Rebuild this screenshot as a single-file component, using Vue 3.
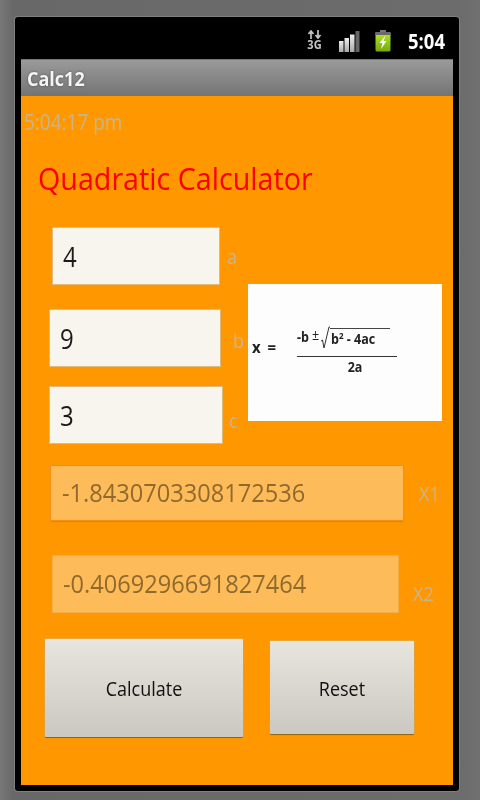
<script setup>
const inputs = [
  { id: 'a', value: '4', cls: 'row-a' },
  { id: 'b', value: '9', cls: 'row-b' },
  { id: 'c', value: '3', cls: 'row-c' }
]
const results = [
  { id: 'X1', value: '-1.8430703308172536', cls: 'res-1' },
  { id: 'X2', value: '-0.4069296691827464', cls: 'res-2' }
]
</script>

<template>
  <div class="desk">
    <div class="phone">
      <header class="status">
        <div class="net">
          <svg width="15" height="9" viewBox="0 0 15 9" class="arrows">
            <path d="M4 9V2M1.500 4L4 1l2.500 3M11 0v7M8.500 5L11 8l2.500-3" fill="none" stroke="#c4c4c4" stroke-width="1.700" />
          </svg>
          <span class="g3"><span class="tall">3G</span></span>
        </div>
        <svg class="signal" width="21" height="21" viewBox="0 0 21 21">
          <defs>
            <linearGradient id="bar" x1="0" y1="0" x2="0" y2="1">
              <stop offset="0" stop-color="#eee" /><stop offset="1" stop-color="#aaa" />
            </linearGradient>
          </defs>
          <rect x="0" y="10" width="4.500" height="11" fill="url(#bar)" />
          <rect x="5.500" y="7" width="4.500" height="14" fill="url(#bar)" />
          <rect x="11" y="3.500" width="4.500" height="17.500" fill="url(#bar)" />
          <rect x="16.500" y="0" width="4" height="21" fill="#666" />
        </svg>
        <svg class="battery" width="16" height="22" viewBox="0 0 16 22">
          <defs>
            <linearGradient id="cell" x1="0" y1="0" x2="0" y2="1">
              <stop offset="0" stop-color="#b8e82c" /><stop offset="1" stop-color="#74aa08" />
            </linearGradient>
          </defs>
          <rect x="5" y="0" width="6" height="3" fill="#777" />
          <rect x="0.500" y="2" width="15" height="19.500" rx="1.500" fill="url(#cell)" />
          <rect x="0.500" y="2" width="15" height="3" fill="#6a6a6a" />
          <path d="M10.500 5.500L4.500 13h3L6 19 11.500 11h-3z" fill="#fff" />
        </svg>
        <span class="clock"><span class="tall">5:04</span></span>
      </header>

      <div class="titlebar"><span class="tall">Calc12</span></div>

      <main class="screen">
        <div class="time"><span class="tall">5:04:17 pm</span></div>
        <h1 class="heading"><span class="tall">Quadratic Calculator</span></h1>

        <section class="top">
          <div class="inputs">
            <div v-for="row in inputs" :key="row.id" class="row" :class="row.cls">
              <div class="field"><span class="tall">{{ row.value }}</span></div>
              <span class="label"><span class="tall">{{ row.id }}</span></span>
            </div>
          </div>
          <div class="formula">
            <span class="x"><span class="tall">x =</span></span>
            <div class="fraction">
              <div class="numerator">
                <span class="tall">-b</span>
                <span class="pm tall">±</span>
                <svg class="root" width="10" height="23" viewBox="0 0 10 23">
                  <path d="M1 15l1.500-1 1.500 8L9 1h1" fill="none" stroke="#333" stroke-width="1" />
                </svg>
                <span class="radicand"><span class="tall">b<sup>2</sup> - 4ac</span></span>
              </div>
              <div class="bar"></div>
              <div class="denominator"><span class="tall">2a</span></div>
            </div>
          </div>
        </section>

        <div v-for="row in results" :key="row.id" class="result" :class="row.cls">
          <div class="output"><span class="tall">{{ row.value }}</span></div>
          <span class="label"><span class="tall">{{ row.id }}</span></span>
        </div>

        <div class="actions">
          <button class="btn calc"><span class="tall">Calculate</span></button>
          <button class="btn reset"><span class="tall">Reset</span></button>
        </div>
      </main>
    </div>
  </div>
</template>

<style scoped>
.desk {
  width: 480px;
  height: 800px;
  box-sizing: border-box;
  padding: 17px 21px 9px 15px;
  background: linear-gradient(90deg, #787878, #686868 14px, #6c6c6c 460px, #707070);
  font-family: "Open Sans", "Noto Sans", sans-serif;
  overflow: hidden;
}
.tall {
  display: inline-block;
  transform: scaleY(1.11);
}
.phone {
  width: 444px;
  height: 774px;
  box-sizing: border-box;
  padding: 0 6px 6px;
  background: #000;
  border-radius: 3px;
  display: flex;
  flex-direction: column;
  box-shadow: 0 0 0 1px #808080;
  filter: blur(0.4px);
}
.status {
  height: 42px;
  flex: none;
  display: flex;
  align-items: center;
  justify-content: flex-end;
  padding-right: 8px;
  color: #fff;
}
.net {
  width: 15px;
  height: 21px;
  display: flex;
  flex-direction: column;
  align-items: center;
  margin-top: 5px;
  margin-right: 17px;
}
.arrows { flex: none; }
.g3 {
  font-size: 11px;
  line-height: 11px;
  font-weight: 700;
  color: #c4c4c4;
}
.signal { margin-top: 6px; margin-right: 15px; }
.battery { margin-top: 5px; margin-right: 17px; }
.clock {
  font-size: 18.500px;
  line-height: 20px;
  font-weight: 700;
  margin-top: 5px;
}
.titlebar {
  height: 37px;
  flex: none;
  box-sizing: border-box;
  padding-left: 6px;
  display: flex;
  align-items: center;
  background: linear-gradient(#9a9a9a, #747474);
  color: #f4f4f4;
  font-size: 18px;
  font-weight: 700;
  text-shadow: 0 0 2px #444;
  border-top: 1px solid #777;
}
.screen {
  flex: 1;
  background: #ff9800;
  overflow: hidden;
}
.time {
  margin-top: 12px;
  height: 28px;
  line-height: 28px;
  padding-left: 3px;
  font-size: 19px;
  color: #c9b48e;
}
.heading {
  margin: 22px 0 0;
  height: 40px;
  line-height: 40px;
  padding-left: 17px;
  font-size: 28.700px;
  font-weight: 400;
  color: #fb0000;
}
.top {
  display: flex;
  align-items: flex-start;
  margin-top: 29px;
}
.inputs {
  width: 227px;
  flex: none;
}
.row {
  display: flex;
  align-items: center;
}
.field {
  height: 58px;
  box-sizing: border-box;
  padding-left: 10px;
  display: flex;
  align-items: center;
  background: #f8f5ef;
  border: 1px solid #e0ba7c;
  color: #1a1a1a;
  font-size: 24px;
}
.label {
  font-size: 18px;
  color: #c9b48e;
}
.row-a .field { width: 168px; margin-left: 31px; }
.row-a .label { margin-left: 7px; }
.row-b { margin-top: 24px; }
.row-b .field { width: 172px; margin-left: 28px; }
.row-b .label { margin-left: 12px; margin-top: 3px; }
.row-c { margin-top: 19px; }
.row-c .field { width: 174px; margin-left: 28px; }
.row-c .label { margin-left: 6px; margin-top: 10px; }
.formula {
  width: 194px;
  height: 137px;
  flex: none;
  margin-top: 57px;
  background: #fdfdfd;
  box-sizing: border-box;
  padding: 41px 0 0 4px;
  display: flex;
  align-items: flex-start;
  color: #222;
  font-weight: 700;
}
.x {
  font-size: 15px;
  line-height: 20px;
  margin-top: 11px;
  width: 45px;
  flex: none;
  word-spacing: 3px;
}
.fraction { width: 100px; }
.numerator {
  height: 24px;
  display: flex;
  align-items: center;
  font-size: 12.500px;
}
.pm {
  font-weight: 400;
  margin-left: 3px;
  margin-top: -3px;
}
.root { margin-left: 1px; margin-top: 1px; }
.radicand {
  width: 60px;
  height: 21px;
  margin-top: 2px;
  padding-left: 1px;
  box-sizing: border-box;
  line-height: 22px;
  font-size: 12.500px;
  border-top: 1px solid #444;
  white-space: nowrap;
}
.radicand sup {
  font-size: 8px;
  line-height: 0;
}
.bar {
  height: 1px;
  background: #333;
  margin-top: 7px;
}
.denominator {
  text-align: center;
  padding-left: 16px;
  font-size: 12.500px;
  line-height: 16px;
  margin-top: 3px;
}
.result {
  display: flex;
  align-items: center;
}
.output {
  box-sizing: border-box;
  display: flex;
  align-items: center;
  padding-left: 11px;
  padding-bottom: 2px;
  background: #fdbb5a;
  color: #8f6a2c;
  font-size: 23.600px;
}
.res-1 { margin-top: 22px; }
.res-1 .output {
  width: 352px;
  height: 54px;
  margin-left: 30px;
  box-shadow: 0 0 1px 1px #f5900f, 0 2px 1px #ee7c00;
}
.res-1 .label { margin-left: 16px; }
.res-2 { margin-top: 35px; }
.res-2 .output {
  width: 347px;
  height: 58px;
  margin-left: 31px;
  padding-left: 10px;
  border: 1px solid #f5ad45;
}
.res-2 .label { margin-left: 14px; margin-top: 18px; }
.actions {
  display: flex;
  align-items: flex-start;
  margin-top: 26px;
}
.btn {
  font-family: inherit;
  font-size: 18px;
  color: #111;
  padding: 0;
  border: 0;
  border-radius: 1px;
  background: linear-gradient(#e8e5df, #cbc8c2);
  box-shadow: 0 1px 1px #8a6010, 0 0 0 1px #e8a83c;
}
.calc { width: 198px; height: 98px; margin-left: 24px; }
.reset { width: 144px; height: 93px; margin-left: 27px; margin-top: 2px; }
</style>

<style>
html, body { margin: 0; background: #6c6c6c; }
</style>
